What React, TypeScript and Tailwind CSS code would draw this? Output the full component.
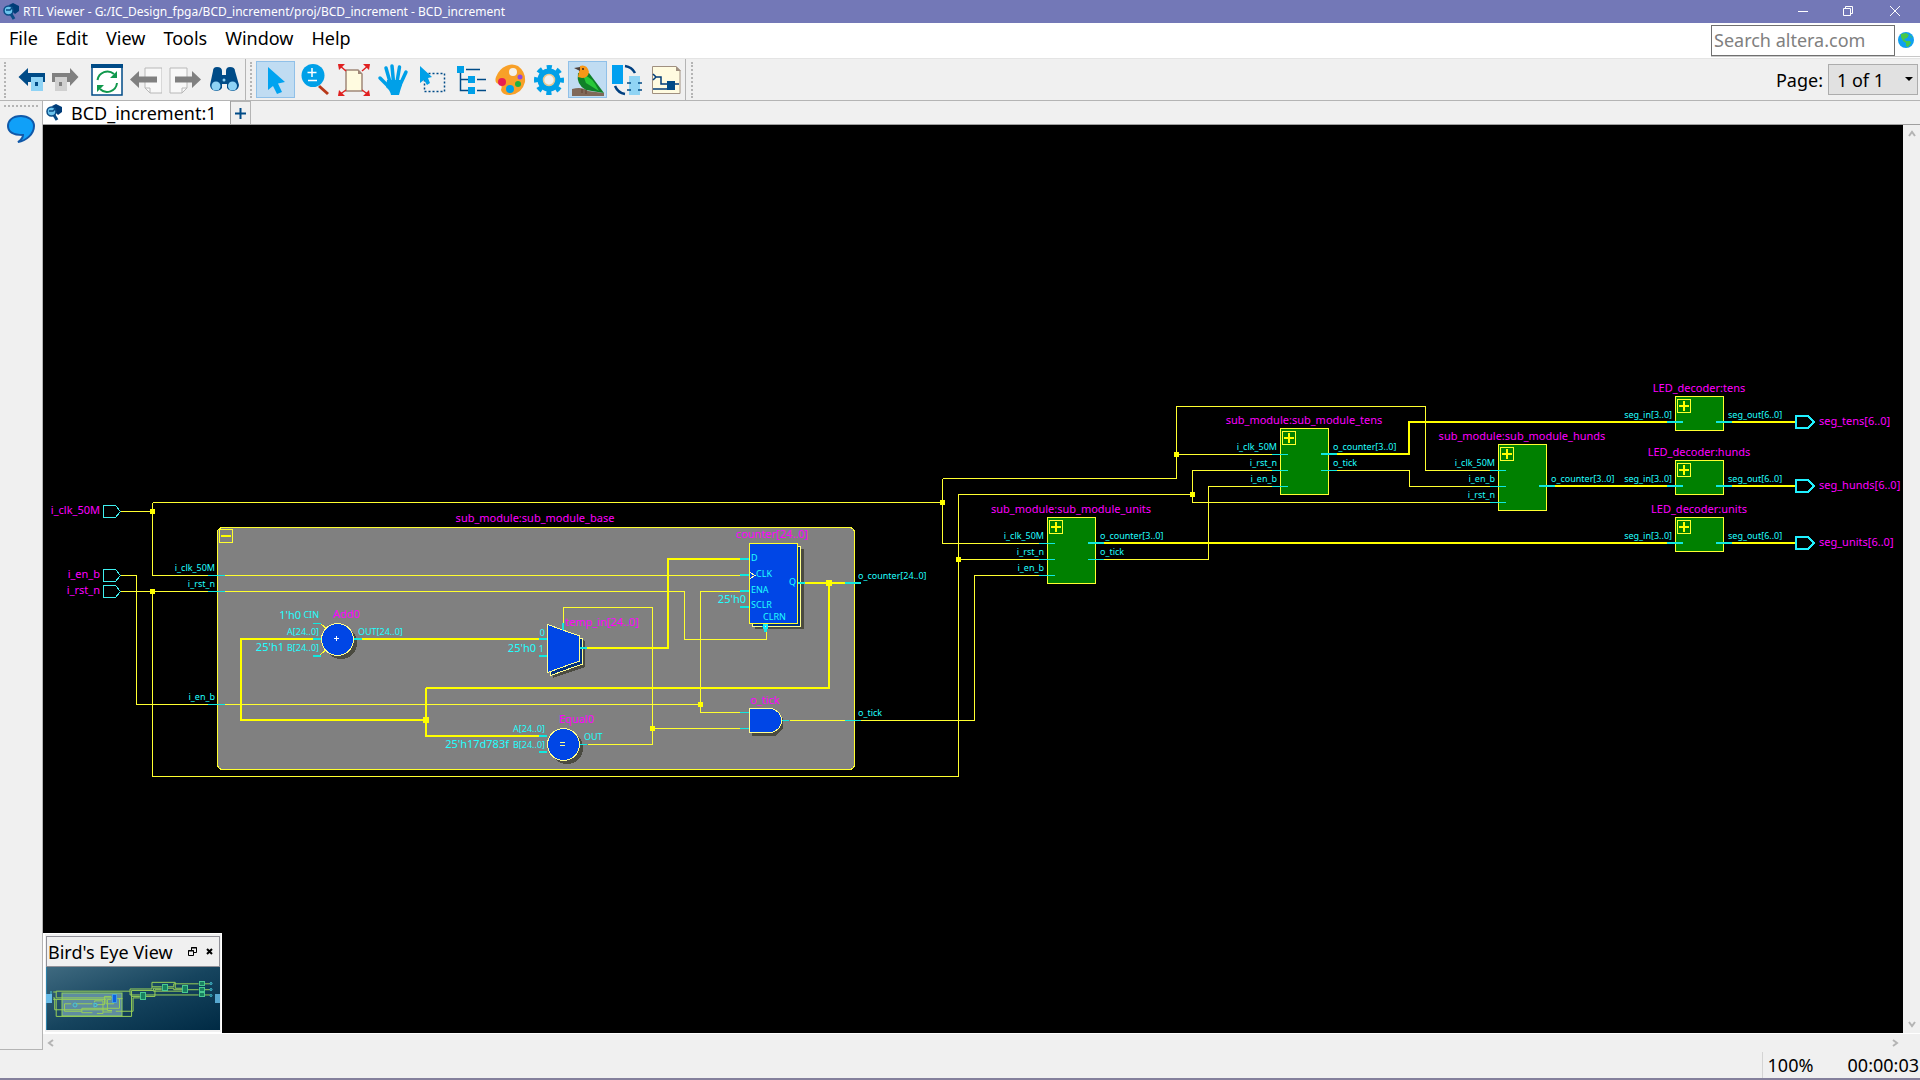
import { useState } from 'react';
import type { ReactNode } from 'react';

const MENUS = ['File', 'Edit', 'View', 'Tools', 'Window', 'Help'];

// one pixel nets
const NETS = [
  'M120 511H152M152 502V575H749M152 502H942M942 478V543H1047M942 478H1176M1176 478V406H1425V470H1498M1176 454H1280',
  'M120 575H136V704H700',
  'M120 591H684V639H766V630M152 591V776H958M958 776V494H1192M958 559H1047M1192 494V470H1280M1192 494V502H1498',
  'M740 591H700V712H749M563 623V607H652V744H587M652 728H749',
  'M789 720H974V575H1047M1095 559H1208V486H1280M1328 470H1409V486H1498',
];

// bus nets
const BUSES = [
  'M313 639H241V720H426M426 688V736H539M426 688H829V583M805 583H861',
  'M362 639H539M587 648H668V559H740',
  'M1095 543H1675M1328 454H1409V422H1675M1546 486H1675',
  'M1723 422H1796M1723 486H1796M1723 543H1796',
];

const JUNCTIONS = [
  [152, 511], [152, 591], [942, 502], [958, 559], [1176, 454],
  [1192, 494], [700, 704], [652, 728],
];

interface Pin {
  name: string;
  y: number;
  bus?: boolean;
}

interface Block {
  title: string;
  x: number;
  y: number;
  h: number;
  inputs: Pin[];
  outputs: Pin[];
}

const BLOCKS: Block[] = [
  {
    title: 'sub_module:sub_module_units', x: 1047, y: 517, h: 66,
    inputs: [{ name: 'i_clk_50M', y: 543 }, { name: 'i_rst_n', y: 559 }, { name: 'i_en_b', y: 575 }],
    outputs: [{ name: 'o_counter[3..0]', y: 543, bus: true }, { name: 'o_tick', y: 559 }],
  },
  {
    title: 'sub_module:sub_module_tens', x: 1280, y: 428, h: 66,
    inputs: [{ name: 'i_clk_50M', y: 454 }, { name: 'i_rst_n', y: 470 }, { name: 'i_en_b', y: 486 }],
    outputs: [{ name: 'o_counter[3..0]', y: 454, bus: true }, { name: 'o_tick', y: 470 }],
  },
  {
    title: 'sub_module:sub_module_hunds', x: 1498, y: 444, h: 66,
    inputs: [{ name: 'i_clk_50M', y: 470 }, { name: 'i_en_b', y: 486 }, { name: 'i_rst_n', y: 502 }],
    outputs: [{ name: 'o_counter[3..0]', y: 486, bus: true }],
  },
  {
    title: 'LED_decoder:tens', x: 1675, y: 396, h: 34,
    inputs: [{ name: 'seg_in[3..0]', y: 422, bus: true }],
    outputs: [{ name: 'seg_out[6..0]', y: 422, bus: true }],
  },
  {
    title: 'LED_decoder:hunds', x: 1675, y: 460, h: 34,
    inputs: [{ name: 'seg_in[3..0]', y: 486, bus: true }],
    outputs: [{ name: 'seg_out[6..0]', y: 486, bus: true }],
  },
  {
    title: 'LED_decoder:units', x: 1675, y: 517, h: 34,
    inputs: [{ name: 'seg_in[3..0]', y: 543, bus: true }],
    outputs: [{ name: 'seg_out[6..0]', y: 543, bus: true }],
  },
];

const IN_PORTS = [
  { name: 'i_clk_50M', y: 511 },
  { name: 'i_en_b', y: 575 },
  { name: 'i_rst_n', y: 591 },
];

const OUT_PORTS = [
  { name: 'seg_tens[6..0]', y: 422 },
  { name: 'seg_hunds[6..0]', y: 486 },
  { name: 'seg_units[6..0]', y: 543 },
];

type Anchor = 'start' | 'middle' | 'end';

function Name({ x, y, anchor = 'start', children }: { x: number; y: number; anchor?: Anchor; children: ReactNode }) {
  return (
    <text x={x} y={y} textAnchor={anchor} className="fill-[#ff00ff] text-[11px]">
      {children}
    </text>
  );
}

function PinName({ x, y, anchor = 'start', children }: { x: number; y: number; anchor?: Anchor; children: ReactNode }) {
  return (
    <text x={x} y={y} textAnchor={anchor} className="fill-[#20ffff] text-[9px]">
      {children}
    </text>
  );
}

function Literal({ x, y, children }: { x: number; y: number; children: ReactNode }) {
  return (
    <text x={x} y={y} textAnchor="end" className="fill-[#20ffff] text-[11px]">
      {children}
    </text>
  );
}

// pin stub, a bus pin is two pixels wide
function Stub({ x1, x2, y, bus }: { x1: number; x2: number; y: number; bus?: boolean }) {
  return <rect x={x1} y={bus ? y - 1 : y} width={x2 - x1} height={bus ? 2 : 1} fill="#10e8e0" />;
}

function ModuleBlock({ block }: { block: Block }) {
  const { title, x, y, h, inputs, outputs } = block;
  return (
    <g>
      <Name x={x + 24} y={y - 4} anchor="middle">{title}</Name>
      <rect x={x + 0.5} y={y + 0.5} width="48" height={h} fill="#008000" stroke="#ffff30" />
      <rect x={x + 2.5} y={y + 3.5} width="13" height="13" fill="none" stroke="#ffff30" />
      <path d={`M${x + 4} ${y + 10}h10M${x + 9} ${y + 5}v10`} stroke="#ffff00" strokeWidth="2" />
      {inputs.map((pin) => (
        <g key={pin.name}>
          <Stub x1={x - 8} x2={x + 8} y={pin.y} bus={pin.bus} />
          <PinName x={x - 3} y={pin.y - 4} anchor="end">{pin.name}</PinName>
        </g>
      ))}
      {outputs.map((pin) => (
        <g key={pin.name}>
          <Stub x1={x + 41} x2={x + 57} y={pin.y} bus={pin.bus} />
          <PinName x={x + 53} y={pin.y - 4}>{pin.name}</PinName>
        </g>
      ))}
    </g>
  );
}

function Schematic() {
  return (
    <svg
      width="1860"
      height="907"
      viewBox="43 125 1860 907"
      shapeRendering="crispEdges"
      className="block shrink-0 font-['Noto_Sans',sans-serif]"
      role="img"
      aria-label="BCD_increment schematic"
    >
      <rect x="217.500" y="527.500" width="637" height="242" rx="5" fill="#808080" stroke="#ffff30" />

      <g transform="translate(0.5 0.5)" fill="none" stroke="#ffff30">
        {NETS.map((d) => <path key={d} d={d} />)}
      </g>
      <g fill="none" stroke="#ffff00" strokeWidth="2">
        {BUSES.map((d) => <path key={d} d={d} />)}
      </g>
      {JUNCTIONS.map(([x, y]) => (
        <rect key={`${x}-${y}`} x={x - 2} y={y - 2} width="5" height="5" fill="#ffff00" />
      ))}
      <rect x="423" y="717" width="6" height="6" fill="#ffff00" />
      <rect x="826" y="580" width="6" height="6" fill="#ffff00" />

      {IN_PORTS.map((port) => (
        <g key={port.name}>
          <path
            d={`M103 ${port.y - 6}h12l5 6l-5 6h-12z`}
            transform="translate(0.5 0.5)"
            fill="none"
            stroke="#40f0f0"
          />
          <Name x={100} y={port.y + 3} anchor="end">{port.name}</Name>
        </g>
      ))}
      {OUT_PORTS.map((port) => (
        <g key={port.name}>
          <path d={`M1796 ${port.y - 6}h12l6 6l-6 6h-12z`} fill="#000" stroke="#20f0ff" strokeWidth="2" />
          <Name x={1819} y={port.y + 3}>{port.name}</Name>
        </g>
      ))}
      {BLOCKS.map((block) => <ModuleBlock key={block.title} block={block} />)}

      {/* sub_module_base */}
      <Name x={535} y={522} anchor="middle">sub_module:sub_module_base</Name>
      <rect x="219.500" y="529.500" width="13" height="13" fill="none" stroke="#ffff30" />
      <path d="M221 536h10" stroke="#ffff00" strokeWidth="2" />
      <Stub x1={208} x2={225} y={575} />
      <Stub x1={208} x2={225} y={591} />
      <Stub x1={208} x2={225} y={704} />
      <PinName x={215} y={571} anchor="end">i_clk_50M</PinName>
      <PinName x={215} y={587} anchor="end">i_rst_n</PinName>
      <PinName x={215} y={700} anchor="end">i_en_b</PinName>
      <Stub x1={845} x2={861} y={583} bus />
      <Stub x1={845} x2={861} y={720} />
      <PinName x={858} y={579}>o_counter[24..0]</PinName>
      <PinName x={858} y={716}>o_tick</PinName>

      {/* Add0 */}
      <circle cx="341" cy="643" r="16" fill="#4a4a40" />
      <path d="M320 623l8 7M320 655l8-7" stroke="#ffff30" />
      <circle cx="337.500" cy="639.500" r="16" fill="#0046e6" stroke="#ffff90" />
      <path d="M334 638.500h5M336.500 636v5" stroke="#fff" />
      <Stub x1={313} x2={321} y={623} />
      <Stub x1={313} x2={321} y={639} bus />
      <Stub x1={313} x2={321} y={656} bus />
      <Stub x1={354} x2={362} y={639} bus />
      <Name x={333} y={618}>Add0</Name>
      <Literal x={301} y={619}>1'h0</Literal>
      <PinName x={319} y={618} anchor="end">CIN</PinName>
      <PinName x={319} y={635} anchor="end">A[24..0]</PinName>
      <Literal x={284} y={651}>25'h1</Literal>
      <PinName x={319} y={651} anchor="end">B[24..0]</PinName>
      <PinName x={358} y={635}>OUT[24..0]</PinName>

      {/* temp_in mux */}
      <path d="M553 630L585 641V667L553 678z" fill="#4a4a40" />
      <path d="M550.500 627.500L582.500 639V664L550.500 675.500z" fill="#003080" stroke="#ffff90" />
      <path d="M547.500 624.500L579.500 636V661L547.500 672.500z" fill="#0046e6" stroke="#ffff90" />
      <rect x="562" y="623" width="2" height="7" fill="#10e8e0" />
      <Stub x1={539} x2={547} y={639} bus />
      <Stub x1={539} x2={547} y={656} bus />
      <Stub x1={580} x2={587} y={648} bus />
      <Name x={565} y={626}>temp_in[24..0]</Name>
      <PinName x={545} y={636} anchor="end">0</PinName>
      <PinName x={544} y={652} anchor="end">1</PinName>
      <Literal x={536} y={652}>25'h0</Literal>

      {/* Equal0 */}
      <circle cx="567" cy="748" r="16" fill="#4a4a40" />
      <circle cx="563.500" cy="744.500" r="16" fill="#0046e6" stroke="#ffff90" />
      <path d="M560 742.500h5M560 745.500h5" stroke="#ffff90" />
      <Stub x1={539} x2={547} y={736} bus />
      <Stub x1={539} x2={547} y={752} bus />
      <Stub x1={580} x2={587} y={744} />
      <Name x={559} y={723}>Equal0</Name>
      <PinName x={545} y={732} anchor="end">A[24..0]</PinName>
      <PinName x={545} y={748} anchor="end">B[24..0]</PinName>
      <Literal x={509} y={748}>25'h17d783f</Literal>
      <PinName x={584} y={740}>OUT</PinName>

      {/* counter register */}
      <rect x="755" y="549" width="49" height="80" fill="#4a4a40" />
      <rect x="752.500" y="546.500" width="48" height="80" fill="#003080" stroke="#ffff90" />
      <rect x="749.500" y="543.500" width="48" height="80" fill="#0046e6" stroke="#ffff30" />
      <path d="M750 572.500l5 3l-5 3" fill="none" stroke="#ffffb0" />
      <circle cx="765.500" cy="626.500" r="2" fill="none" stroke="#10e8ff" strokeWidth="2" />
      <path d="M765.500 629v3" stroke="#10e8e0" strokeWidth="3" />
      <Stub x1={740} x2={749} y={559} bus />
      <Stub x1={740} x2={749} y={575} bus />
      <Stub x1={740} x2={749} y={591} bus />
      <Stub x1={740} x2={749} y={607} bus />
      <Stub x1={798} x2={805} y={583} bus />
      <Name x={772} y={538} anchor="middle">counter[24..0]</Name>
      <PinName x={751} y={561}>D</PinName>
      <PinName x={756} y={577}>CLK</PinName>
      <PinName x={751} y={593}>ENA</PinName>
      <PinName x={751} y={608}>SCLR</PinName>
      <PinName x={763} y={620}>CLRN</PinName>
      <PinName x={796} y={585} anchor="end">Q</PinName>
      <Literal x={746} y={603}>25'h0</Literal>

      {/* o_tick gate */}
      <path d="M752 711h23l8 7v10l-7 8h-24z" fill="#4a4a40" />
      <path d="M749.500 708.500h22q10 3 10 12t-10 12h-22z" fill="#0046e6" stroke="#ffff90" />
      <Stub x1={740} x2={749} y={712} />
      <Stub x1={740} x2={749} y={728} />
      <Stub x1={782} x2={789} y={720} />
      <Name x={765} y={704} anchor="middle">o_tick</Name>
    </svg>
  );
}

function BirdsEyeMap() {
  return (
    <svg width="174" height="63" viewBox="0 0 174 63" className="block">
      <defs>
        <linearGradient id="sea" x1="0" y1="0" x2="1" y2="1">
          <stop offset="0" stopColor="#3f6a80" />
          <stop offset="0.5" stopColor="#16445e" />
          <stop offset="1" stopColor="#002a44" />
        </linearGradient>
      </defs>
      <rect width="174" height="63" fill="url(#sea)" />
      <rect x="16" y="26" width="60" height="23" fill="#5f8ca0" stroke="#8fcf60" />
      <g transform="translate(-4 -22) scale(0.0935 0.092)" fill="none" stroke="#98d058">
        {NETS.map((d) => <path key={d} d={d} vectorEffect="non-scaling-stroke" />)}
        {BUSES.map((d) => <path key={d} d={d} vectorEffect="non-scaling-stroke" />)}
      </g>
      <g fill="#188060" stroke="#48c890">
        <rect x="94.500" y="25.500" width="5" height="7" />
        <rect x="116.500" y="17.500" width="5" height="6" />
        <rect x="136.500" y="18.500" width="5" height="7" />
        <rect x="153.500" y="14.500" width="5" height="4" />
        <rect x="153.500" y="20.500" width="5" height="4" />
        <rect x="153.500" y="25.500" width="5" height="4" />
      </g>
      <g fill="none" stroke="#48c8d8">
        <circle cx="165" cy="16.500" r="1" />
        <circle cx="165" cy="22.500" r="1" />
        <circle cx="165" cy="28.500" r="1" />
        <circle cx="29" cy="38" r="2" />
        <path d="M48 36v4l3-1v-2zM5 24v6" />
      </g>
      <rect x="66.500" y="27.500" width="4" height="8" fill="#1060e0" stroke="#40a0e0" />
      <path d="M0.500 0v63" stroke="#2c80a8" />
      <rect x="0" y="27" width="6" height="9" fill="#68bce8" />
      <rect x="169" y="27" width="5" height="9" fill="#58a8d0" />
    </svg>
  );
}

function AppIcon() {
  return (
    <svg width="18" height="18" viewBox="0 0 18 18" aria-hidden="true">
      <path d="M7 2l4-2l6 3v5l-4 3l-3-3z" fill="#003c78" />
      <circle cx="6.500" cy="7.500" r="4.500" fill="#6cc4ee" stroke="#0a4c86" strokeWidth="1.500" />
      <path d="M4 7h4l2-2" stroke="#0a4c86" strokeWidth="1.500" fill="none" />
      <path d="M9 11l3 5" stroke="#0a4c86" strokeWidth="3" />
    </svg>
  );
}

function Icon({ children }: { children: ReactNode }) {
  return (
    <svg width="32" height="32" viewBox="0 0 32 32" fill="none" aria-hidden="true" className="shrink-0">
      {children}
    </svg>
  );
}

const HISTORY_TOOLS: { label: string; icon: ReactNode }[] = [
  {
    label: 'Undo',
    icon: (
      <>
        <path d="M2.500 13L12 4V9H29V18H12V22z" fill="#004b87" />
        <rect x="15" y="13" width="12" height="14" fill="#8fd3f5" />
        <rect x="19" y="18" width="3" height="4" fill="#004b87" />
      </>
    ),
  },
  {
    label: 'Redo',
    icon: (
      <>
        <path d="M28.500 13L20 4V9H2V18H20V22z" fill="#808080" />
        <rect x="5" y="13" width="12" height="14" fill="#d0d0d0" />
        <rect x="9" y="18" width="3" height="4" fill="#808080" />
      </>
    ),
  },
];

const PAGE_TOOLS: { label: string; icon: ReactNode }[] = [
  {
    label: 'Refresh',
    icon: (
      <>
        <rect x="1" y="1" width="30" height="30" fill="#fff" stroke="#004b87" strokeWidth="1.500" />
        <rect x="0" y="0" width="32" height="4" fill="#004b87" />
        <path d="M6.500 16A10 10 0 0 1 23 10M26 19A10 10 0 0 1 9 25" stroke="#10984c" strokeWidth="2" />
        <path d="M26 7v7h-7zM6 28v-7h7z" fill="#10984c" />
      </>
    ),
  },
  {
    label: 'Back',
    icon: (
      <>
        <path d="M15 4H32V29H20L15 24z" fill="#f8f8f8" stroke="#b8b8b8" />
        <path d="M15 24h5v5" stroke="#b8b8b8" />
        <path d="M0 15.500L9 7V12.500H27V18.500H9V24z" fill="#808080" />
      </>
    ),
  },
  {
    label: 'Forward',
    icon: (
      <>
        <path d="M1 4H18V24L13 29H1z" fill="#f8f8f8" stroke="#b8b8b8" />
        <path d="M18 24h-5v5" stroke="#b8b8b8" />
        <path d="M32 15.500L23 7V12.500H6V18.500H23V24z" fill="#808080" />
      </>
    ),
  },
  {
    label: 'Find',
    icon: (
      <>
        <path
          d="M5 7q0-4 4-4q5 0 5 4v4h4V7q0-4 4-4q5 0 5 4l4 14a6.500 6.500 0 0 1-12 3v-4h-5v4a6.500 6.500 0 0 1-12-3z"
          fill="#004b87"
        />
        <circle cx="8" cy="22" r="4.500" fill="#8fd3f5" />
        <circle cx="24.500" cy="22" r="4.500" fill="#8fd3f5" />
        <circle cx="16" cy="16" r="1.500" fill="#8fd3f5" />
      </>
    ),
  },
];

const VIEW_TOOLS: { label: string; on?: boolean; icon: ReactNode }[] = [
  {
    label: 'Select',
    on: true,
    icon: <path d="M8 3V26L13 22L17 30L22 28L18 19.500L25 18z" fill="#00a3f0" />,
  },
  {
    label: 'Zoom',
    icon: (
      <>
        <path d="M20 22L29 30" stroke="#b83818" strokeWidth="3" />
        <circle cx="14" cy="11.500" r="11.500" fill="#00a0e8" />
        <path d="M8.500 8.500h9M13 4v9M9 16.500h9" stroke="#fff" strokeWidth="1.500" />
      </>
    ),
  },
  {
    label: 'Fit in window',
    icon: (
      <>
        <path d="M8 6H20L24 10V27H8z" fill="#fffbe0" stroke="#a08878" strokeWidth="1.500" />
        <path d="M20 6v4h4" fill="#a08878" />
        <path d="M1 1l7 6M31 1l-7 6M1 31l7-5M31 31l-7-5" stroke="#e02020" strokeWidth="1.500" />
        <path d="M0 0h7L1 6zM32 0h-7l6 6zM0 32h7l-6-6zM32 32h-7l6-6z" fill="#e02020" />
      </>
    ),
  },
  {
    label: 'Hand',
    icon: (
      <>
        <path d="M9 4L13 18M15 2L16.500 18M22.500 3L20 18M29 8L23 21M3 14L12 23" stroke="#00a0e8" strokeWidth="3.500" strokeLinecap="round" />
        <path d="M10 16h14l1 5q-2 6-3 10h-8q-1-5-5-8z" fill="#00a0e8" />
      </>
    ),
  },
  {
    label: 'Area selection',
    icon: (
      <>
        <rect x="8.500" y="9.500" width="20" height="18" stroke="#004b87" strokeWidth="1.500" strokeDasharray="2 2" />
        <path d="M4 2V19L8 16L11 21L14 19L12 14L16 13z" fill="#00a0e8" />
      </>
    ),
  },
  {
    label: 'Netlist navigator',
    icon: (
      <>
        <path d="M5.500 8V26.500H13M5.500 15.500H13M22 15.500H31M22 26.500H31M11 5.500H25" stroke="#004b87" strokeWidth="1.500" />
        <path d="M2 2h7v7H2zM13 12h7v7h-7zM13 23h7v7h-7z" fill="#00a0e8" />
      </>
    ),
  },
  {
    label: 'Color settings',
    icon: (
      <>
        <path d="M12 2Q18-1 24 2Q32 8 31 18Q28 30 16 31Q8 31 7 26Q9 21 5 20Q0 19 2 13Q5 5 12 2z" fill="#f8a028" />
        <circle cx="19" cy="8" r="4" fill="#f4f0e8" />
        <circle cx="8" cy="18" r="4" fill="#e82050" />
        <circle cx="16" cy="25" r="4" fill="#00a0e8" />
        <circle cx="24" cy="20" r="3" fill="#20b040" />
        <circle cx="26" cy="13" r="2.500" fill="#9048e0" />
      </>
    ),
  },
  {
    label: 'Settings',
    icon: (
      <>
        <circle cx="16" cy="16" r="8.500" stroke="#00a0e8" strokeWidth="6" />
        <circle cx="16" cy="16" r="12.500" stroke="#00a0e8" strokeWidth="5" strokeDasharray="5 4.800" strokeDashoffset="2.500" />
        <circle cx="16" cy="16" r="5.500" fill="#f0f0f0" stroke="#e8c890" strokeWidth="1.500" />
      </>
    ),
  },
  {
    label: "Bird's eye view",
    on: true,
    icon: (
      <>
        <path d="M0 25Q10 22 16 27L32 29V32H0z" fill="#806858" />
        <path d="M6 9Q4 21 14 26L20 27L32 29L17 9z" fill="#108028" />
        <path d="M11 11Q20 12 27 27L14 19z" fill="#28c838" />
        <path d="M8 2Q15 0 17 8Q16 14 10 14L6 13z" fill="#f89818" />
        <path d="M2 4l6-1v4z" fill="#504038" />
        <circle cx="11" cy="5" r="1" fill="#302020" />
        <path d="M10 25v4M14 26v4" stroke="#604030" />
      </>
    ),
  },
  {
    label: 'Swap',
    icon: (
      <>
        <rect x="1" y="1" width="11" height="19" fill="#00a0f0" />
        <rect x="18" y="12" width="11" height="19" fill="#90d4f4" />
        <path d="M14 2Q21 3 24 9M4 22Q7 29 14 30" stroke="#004080" strokeWidth="2.500" />
        <path d="M16 19h4M16 26h4M27 19h4M27 26h4" stroke="#004b87" strokeWidth="1.500" />
      </>
    ),
  },
  {
    label: 'Probe',
    icon: (
      <>
        <path d="M2.500 2.500H26L30 6.500V29.500H2.500z" fill="#fffbe0" stroke="#a09080" />
        <path d="M26 2v5h5z" fill="#a09080" />
        <path d="M3 10l3 3l-3 3M6 13h5v7h18M3 25h14l3-3" stroke="#003c78" strokeWidth="1.500" />
        <rect x="17" y="17" width="8" height="9" fill="#004b87" />
      </>
    ),
  },
];

function Grip() {
  return <span className="h-[36px] border-l-2 border-dotted border-[#b4b4b4]" />;
}

function ToolButton({ label, on, children }: { label: string; on?: boolean; children: ReactNode }) {
  return (
    <button
      type="button"
      aria-label={label}
      aria-pressed={on}
      className={
        on
          ? 'flex h-[37px] w-[39px] items-center justify-center border border-[#90c0e8] bg-[#c0dcf2]'
          : 'flex h-[37px] w-[39px] items-center justify-center'
      }
    >
      <Icon>{children}</Icon>
    </button>
  );
}

function Chevron({ d }: { d: string }) {
  return (
    <svg width="8" height="8" viewBox="0 0 8 8" fill="none" stroke="#b4b4b4" strokeWidth="2" aria-hidden="true">
      <path d={d} />
    </svg>
  );
}

export default function App() {
  const [search, setSearch] = useState('');
  const [page, setPage] = useState('1 of 1');

  return (
    <div className="flex h-screen flex-col overflow-hidden bg-[#f0f0f0] font-['Noto_Sans','Open_Sans',sans-serif] text-lg text-black">
      <header className="flex h-[23px] shrink-0 items-center bg-[#7378b7] pl-[2px] text-white">
        <AppIcon />
        <h1 className="ml-[3px] flex-1 text-xs">
          RTL Viewer - G:/IC_Design_fpga/BCD_increment/proj/BCD_increment - BCD_increment
        </h1>
        <div className="flex h-full items-center">
          <button type="button" aria-label="Minimize" className="flex h-full w-[45px] items-center justify-center">
            <svg width="11" height="11" stroke="#fff"><path d="M0 5.500h10" /></svg>
          </button>
          <button type="button" aria-label="Restore" className="flex h-full w-[45px] items-center justify-center">
            <svg width="11" height="11" fill="none" stroke="#fff">
              <path d="M0.500 2.500h7v7h-7zM2.500 2.500v-2h7v7h-2" />
            </svg>
          </button>
          <button type="button" aria-label="Close" className="flex h-full w-[49px] items-center justify-center">
            <svg width="11" height="11" stroke="#fff"><path d="M0 0l10 10M10 0L0 10" /></svg>
          </button>
        </div>
      </header>

      <div className="flex h-[36px] shrink-0 items-center justify-between border-b border-[#e4e4e4] bg-white">
        <nav className="flex h-[30px] items-center self-start">
          {MENUS.map((menu) => (
            <button key={menu} type="button" className="px-[9px]">{menu}</button>
          ))}
        </nav>
        <form className="flex items-center border-b border-[#c8c8c8] pr-[6px]" onSubmit={(e) => e.preventDefault()}>
          <input
            type="text"
            aria-label="Search altera.com"
            placeholder="Search altera.com"
            value={search}
            onChange={(e) => setSearch(e.target.value)}
            className="h-[31px] w-[184px] border border-[#707070] bg-white px-[2px] placeholder:text-[#808080] focus:outline-none"
          />
          <button type="submit" aria-label="Search" className="ml-[3px]">
            <svg width="16" height="16" viewBox="0 0 16 16">
              <circle cx="8" cy="8" r="8" fill="#10a0f0" />
              <path d="M3 2l5-1l3 2l-2 3l-3 1l2 2l4 0l1 2l-3 4l-2-1l0-3l-3-2l-2-4z" fill="#48c848" />
              <path d="M12 3l2 2l-1 1z" fill="#48c848" />
            </svg>
          </button>
        </form>
      </div>

      <div className="flex h-[42px] shrink-0 items-center border-b border-[#b4b4b4]">
        <div className="flex h-full items-center border-r border-[#b4b4b4] pr-[2px] pl-1">
          <Grip />
          <div className="flex pl-[9px]">
            {HISTORY_TOOLS.map((tool) => (
              <button key={tool.label} type="button" aria-label={tool.label} className="flex w-[34px] justify-center">
                <Icon>{tool.icon}</Icon>
              </button>
            ))}
          </div>
          <div className="flex pl-1">
            {PAGE_TOOLS.map((tool) => (
              <ToolButton key={tool.label} label={tool.label}>{tool.icon}</ToolButton>
            ))}
          </div>
        </div>
        <div className="flex h-full items-center border-r border-[#b4b4b4] pl-1">
          <Grip />
          <div className="flex pl-1">
            {VIEW_TOOLS.map((tool) => (
              <ToolButton key={tool.label} label={tool.label} on={tool.on}>{tool.icon}</ToolButton>
            ))}
          </div>
        </div>
        <div className="flex h-full flex-1 items-center pl-[5px]">
          <Grip />
        </div>
        <label htmlFor="page" className="pr-[5px]">Page:</label>
        <div className="relative mr-[2px]">
          <select
            id="page"
            value={page}
            onChange={(e) => setPage(e.target.value)}
            className="block h-[31px] w-[90px] appearance-none border border-[#acacac] bg-[#e1e1e1] pl-2"
          >
            <option>1 of 1</option>
          </select>
          <svg width="8" height="4" className="pointer-events-none absolute top-[13px] right-[5px]">
            <path d="M0 0h8L4 4z" fill="#000" />
          </svg>
        </div>
      </div>

      <div className="flex min-h-0 flex-1">
        <aside className="mb-px flex w-[43px] shrink-0 flex-col items-center border-r border-b border-[#b4b4b4] pt-1">
          <span className="w-[34px] border-t-2 border-dotted border-[#b4b4b4]" />
          <button type="button" aria-label="Messages" className="mt-2">
            <svg width="30" height="29" viewBox="0 0 30 29">
              <path
                d="M15 1C6 1 2 6 2 11C2 17 8 20 17 20C17 23 15 25 12 27C20 26 28 19 28 11C28 5 22 1 15 1z"
                fill="#10a0f8"
                stroke="#1058a8"
                strokeWidth="2"
              />
            </svg>
          </button>
        </aside>

        <main className="flex min-w-0 flex-1 flex-col">
          <div className="flex h-[24px] shrink-0 border-b border-[#a0a0a0]" role="tablist">
            <button
              type="button"
              role="tab"
              aria-selected="true"
              className="flex w-[188px] items-center gap-2 border-r border-[#a0a0a0] bg-white pl-[2px] leading-6"
            >
              <AppIcon />
              BCD_increment:1
            </button>
            <button
              type="button"
              aria-label="New tab"
              className="flex w-[20px] items-center justify-center border-t border-r border-[#b4b4b4]"
            >
              <svg width="11" height="11" stroke="#004b87" strokeWidth="2"><path d="M5.500 0v11M0 5.500h11" /></svg>
            </button>
          </div>

          <div className="flex min-h-0 flex-1">
            <div className="relative min-w-0 flex-1 overflow-hidden bg-black">
              <Schematic />
              <section className="absolute bottom-0 left-0 border border-l-2 border-white bg-[#f0f0f0] pt-[2px] pr-px pb-[2px] pl-px">
                <div className="flex h-[31px] items-center border border-[#909098] pl-px">
                  <h2 className="flex-1 whitespace-nowrap">Bird's Eye View</h2>
                  <button type="button" aria-label="Float" className="mr-[9px]">
                    <svg width="9" height="9" fill="none" stroke="#000">
                      <path d="M0.500 3.500h5v5h-5zM0 4h6M3.500 3V0.500h5v5H6M3 1h6" />
                    </svg>
                  </button>
                  <button type="button" aria-label="Close" className="mr-[6px]">
                    <svg width="7" height="7" stroke="#000" strokeWidth="2"><path d="M1 1l5 5M6 1L1 6" /></svg>
                  </button>
                </div>
                <BirdsEyeMap />
              </section>
            </div>
            <div className="flex w-[17px] shrink-0 flex-col items-center justify-between py-[5px]">
              <Chevron d="M1 6l3-4l3 4" />
              <Chevron d="M1 2l3 4l3-4" />
            </div>
          </div>

          <div className="flex h-[18px] shrink-0 items-center justify-between border-t border-white pr-[21px] pl-1">
            <Chevron d="M6 1L2 4l4 3" />
            <Chevron d="M2 1l4 3l-4 3" />
          </div>
        </main>
      </div>

      <footer className="flex h-[29px] shrink-0 items-center justify-end border-b-2 border-[#84809c] pt-px">
        <div className="flex h-full items-center justify-between border-l border-[#d4d4d4] pl-[5px]">
          <span className="w-[80px]">100%</span>
          <span className="pr-px">00:00:03</span>
        </div>
      </footer>
    </div>
  );
}
